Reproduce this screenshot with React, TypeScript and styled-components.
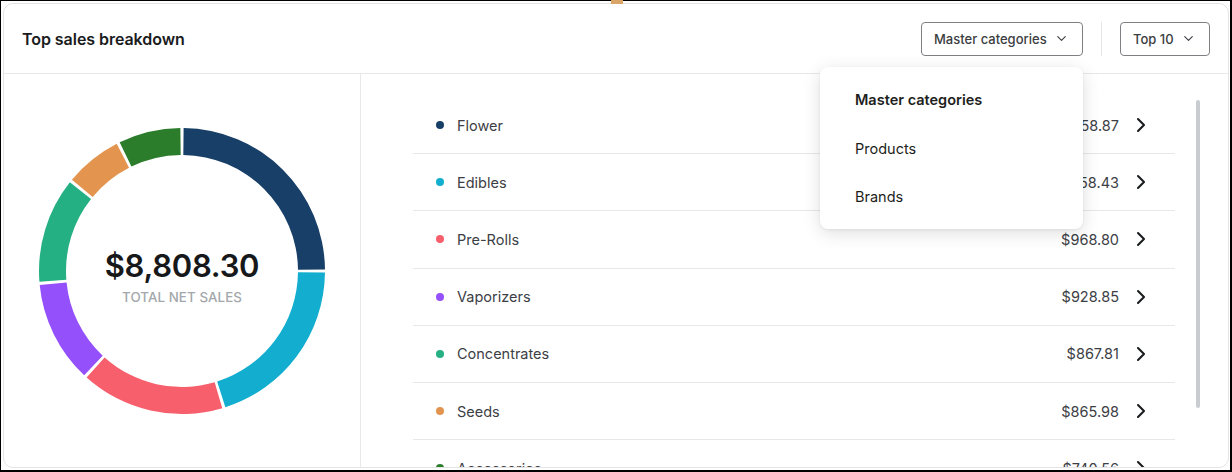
import React from "react";
import styled, { createGlobalStyle } from "styled-components";
import { ChevronDown, ChevronRight } from "lucide-react";

const GlobalStyle = createGlobalStyle`
  html, body {
    margin: 0;
    padding: 0;
    background: #fff;
  }
  body {
    font-family: Inter, "Noto Sans", "Liberation Sans", sans-serif;
    color: #1c1d1f;
  }
  * {
    box-sizing: border-box;
  }
`;

const Frame = styled.div`
  position: relative;
  width: 1232px;
  height: 472px;
  border-top: 1px solid #000;
  border-left: 1px solid #000;
  border-right: 2px solid #000;
  border-bottom: 2px solid #000;
  padding: 2px 1px 2px 2px;
  background: #fff;
`;

const TopMark = styled.span`
  position: absolute;
  top: -1px;
  left: 610px;
  width: 12px;
  height: 4px;
  background: #d9a468;
`;

const Card = styled.div`
  width: 1226px;
  height: 465px;
  border: 1px solid #e4e4e4;
  border-radius: 10px;
  overflow: hidden;
  display: flex;
  flex-direction: column;
`;

const Header = styled.div`
  height: 70px;
  flex: none;
  display: flex;
  align-items: center;
  justify-content: space-between;
  padding: 0 18px 0 18px;
  border-bottom: 1px solid #e8e8e8;
`;

const Title = styled.h2`
  margin: 0;
  font-size: 16px;
  font-weight: 600;
  letter-spacing: -0.05px;
  color: #1a1b1d;
`;

const Controls = styled.div`
  display: flex;
  align-items: center;
  gap: 18px;
`;

const MenuAnchor = styled.div`
  position: relative;
`;

const SelectButton = styled.button<{ $w: number }>`
  width: ${(p) => p.$w}px;
  height: 34px;
  display: flex;
  align-items: center;
  justify-content: space-between;
  padding: 0 13px 0 12px;
  border: 1px solid #7d7f82;
  border-radius: 4px;
  background: #fff;
  font-family: inherit;
  font-size: 13px;
  font-weight: 500;
  color: #3b3d40;
  svg {
    color: #3b3d40;
  }
`;

const VDivider = styled.span`
  width: 1px;
  height: 34px;
  background: #e6e6e6;
`;

const Menu = styled.ul`
  position: absolute;
  top: 45px;
  right: 0;
  width: 263px;
  margin: 0;
  padding: 9px 0 8px;
  list-style: none;
  background: #fff;
  border-radius: 8px;
  box-shadow: 0 4px 18px rgba(0, 0, 0, 0.13), 0 1px 3px rgba(0, 0, 0, 0.06);
  z-index: 5;
`;

const MenuItem = styled.li<{ $active?: boolean }>`
  height: 48.5px;
  display: flex;
  align-items: center;
  padding-left: 35px;
  font-size: 14.5px;
  font-weight: ${(p) => (p.$active ? 600 : 400)};
  color: #1d1e20;
`;

const Body = styled.div`
  flex: 1;
  display: flex;
  min-height: 0;
`;

const ChartPanel = styled.div`
  width: 357px;
  flex: none;
  border-right: 1px solid #e8e8e8;
  display: flex;
  align-items: center;
  justify-content: center;
`;

const Donut = styled.div`
  position: relative;
  width: 300px;
  height: 300px;
  svg {
    display: block;
  }
`;

const DonutLabel = styled.div`
  position: absolute;
  inset: 0;
  display: flex;
  flex-direction: column;
  align-items: center;
  justify-content: center;
  padding-top: 10px;
`;

const Total = styled.div`
  font-size: 31px;
  font-weight: 600;
  letter-spacing: -0.3px;
  color: #17181a;
  line-height: 38px;
`;

const TotalCaption = styled.div`
  margin-top: 4px;
  font-size: 13.3px;
  font-weight: 500;
  color: #a3a7ab;
  letter-spacing: 0.1px;
`;

const ListPanel = styled.div`
  flex: 1;
  display: flex;
  padding: 23px 0 0 52px;
  overflow: hidden;
`;

const List = styled.ul`
  width: 762px;
  margin: 0;
  padding: 0;
  list-style: none;
`;

const Row = styled.li`
  height: 57.2px;
  display: flex;
  align-items: center;
  padding: 0 22px 0 23px;
  border-bottom: 1px solid #e8e8e8;
  font-size: 14.5px;
  color: #3c4045;
`;

const Dot = styled.span<{ $color: string }>`
  width: 8px;
  height: 8px;
  border-radius: 50%;
  background: ${(p) => p.$color};
  margin-right: 13px;
  flex: none;
`;

const Label = styled.span`
  flex: 1;
`;

const Amount = styled.span`
  margin-right: 10px;
`;

const Scrollbar = styled.div`
  width: 4px;
  height: 308px;
  margin: 3px 0 0 21px;
  border-radius: 2px;
  background: #c9cdd1;
  flex: none;
`;

const segments = [
  { color: "#173f68", from: 0, to: 90 },
  { color: "#13aecf", from: 90, to: 163 },
  { color: "#f75f6c", from: 163, to: 222.5 },
  { color: "#9450fa", from: 222.5, to: 265 },
  { color: "#25b083", from: 265, to: 309 },
  { color: "#e39550", from: 309, to: 333.5 },
  { color: "#2b7c2b", from: 333.5, to: 360 },
];

const rows = [
  { name: "Flower", amount: "$2,258.87", color: "#173f68" },
  { name: "Edibles", amount: "$1,758.43", color: "#13aecf" },
  { name: "Pre-Rolls", amount: "$968.80", color: "#f75f6c" },
  { name: "Vaporizers", amount: "$928.85", color: "#9450fa" },
  { name: "Concentrates", amount: "$867.81", color: "#25b083" },
  { name: "Seeds", amount: "$865.98", color: "#e39550" },
  { name: "Accessories", amount: "$740.56", color: "#2b7c2b" },
];

function point(cx: number, cy: number, r: number, deg: number) {
  const a = ((deg - 90) * Math.PI) / 180;
  return [cx + r * Math.cos(a), cy + r * Math.sin(a)];
}

function sector(from: number, to: number) {
  const cx = 150;
  const cy = 150;
  const ro = 143;
  const ri = 116;
  const gap = 0.65;
  const a0 = from + gap;
  const a1 = to - gap;
  const large = a1 - a0 > 180 ? 1 : 0;
  const [x0, y0] = point(cx, cy, ro, a0);
  const [x1, y1] = point(cx, cy, ro, a1);
  const [x2, y2] = point(cx, cy, ri, a1);
  const [x3, y3] = point(cx, cy, ri, a0);
  return `M${x0} ${y0} A${ro} ${ro} 0 ${large} 1 ${x1} ${y1} L${x2} ${y2} A${ri} ${ri} 0 ${large} 0 ${x3} ${y3} Z`;
}

export default function App() {
  return (
    <>
      <GlobalStyle />
      <Frame>
        <TopMark />
        <Card>
          <Header>
            <Title>Top sales breakdown</Title>
            <Controls>
              <MenuAnchor>
                <SelectButton $w={162}>
                  Master categories
                  <ChevronDown size={15} strokeWidth={1.8} />
                </SelectButton>
                <Menu>
                  <MenuItem $active>Master categories</MenuItem>
                  <MenuItem>Products</MenuItem>
                  <MenuItem>Brands</MenuItem>
                </Menu>
              </MenuAnchor>
              <VDivider />
              <SelectButton $w={90}>
                Top 10
                <ChevronDown size={15} strokeWidth={1.8} />
              </SelectButton>
            </Controls>
          </Header>
          <Body>
            <ChartPanel>
              <Donut>
                <svg width="300" height="300" viewBox="0 0 300 300">
                  {segments.map((s) => (
                    <path key={s.color} d={sector(s.from, s.to)} fill={s.color} />
                  ))}
                </svg>
                <DonutLabel>
                  <Total>$8,808.30</Total>
                  <TotalCaption>TOTAL NET SALES</TotalCaption>
                </DonutLabel>
              </Donut>
            </ChartPanel>
            <ListPanel>
              <List>
                {rows.map((r) => (
                  <Row key={r.name}>
                    <Dot $color={r.color} />
                    <Label>{r.name}</Label>
                    <Amount>{r.amount}</Amount>
                    <ChevronRight size={24} strokeWidth={2.1} color="#1b1c1e" />
                  </Row>
                ))}
              </List>
              <Scrollbar />
            </ListPanel>
          </Body>
        </Card>
      </Frame>
    </>
  );
}
